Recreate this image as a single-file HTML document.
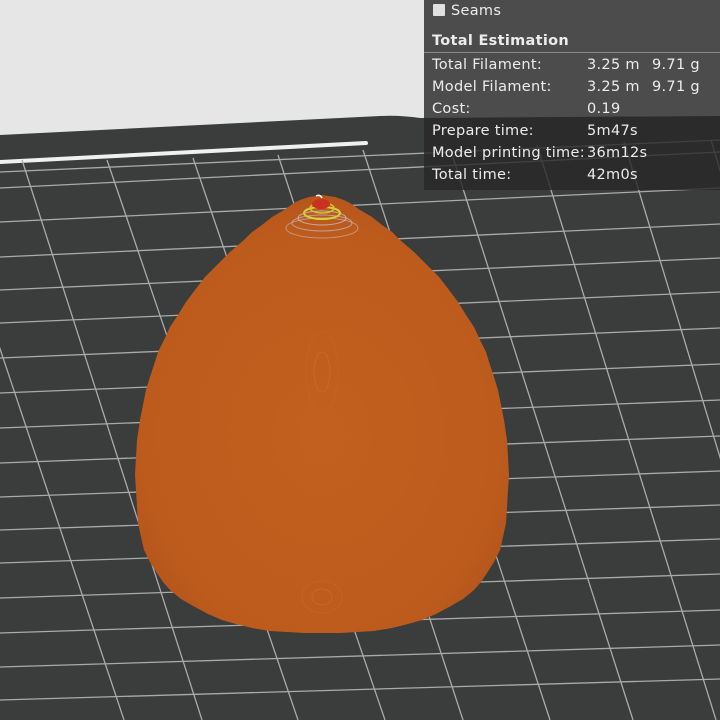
<!DOCTYPE html>
<html><head><meta charset="utf-8"><style>
html,body{margin:0;padding:0;width:720px;height:720px;overflow:hidden;background:#e6e6e6;font-family:"DejaVu Sans","Liberation Sans",sans-serif}
svg{position:absolute;left:0;top:0}
.panel{position:absolute;left:424px;top:0;width:296px;height:190px;background:rgba(39,39,39,0.81);color:#ececec;font-size:14.5px;letter-spacing:0.3px}
.row{position:absolute;left:8px;white-space:nowrap;line-height:20px}
.c2{position:absolute;left:155px;top:0}
.c3{position:absolute;left:220px;top:0}
.sep{position:absolute;left:0;top:52px;width:296px;height:1px;background:#8a8a8a}
.cb{position:absolute;left:9px;top:4px;width:12px;height:12px;background:#e0e0e0;border-radius:1px}
</style></head><body>
<svg width="720" height="720" viewBox="0 0 720 720">
<defs>
<radialGradient id="eg" cx="0.5" cy="0.55" r="0.6">
<stop offset="0" stop-color="#c2601f"/>
<stop offset="0.8" stop-color="#bd5b1d"/>
<stop offset="1" stop-color="#b05219"/>
</radialGradient>
</defs>
<path d="M0,135 L380,116 Q400,115 420,118 L720,116 L720,720 L0,720 Z" fill="#3b3d3d"/>
<line x1="0" y1="162" x2="366" y2="143" stroke="#f0f0f0" stroke-width="4" stroke-linecap="round"/>
<g stroke="#a9abab" stroke-width="1.3" fill="none">
<line x1="0" y1="172" x2="720" y2="140"/>
<line x1="0" y1="188" x2="720" y2="152"/>
<line x1="0" y1="222" x2="720" y2="188"/>
<line x1="0" y1="257" x2="720" y2="224"/>
<line x1="0" y1="290" x2="720" y2="258"/>
<line x1="0" y1="323" x2="720" y2="292"/>
<line x1="0" y1="358" x2="720" y2="328"/>
<line x1="0" y1="393" x2="720" y2="364"/>
<line x1="0" y1="428" x2="720" y2="400"/>
<line x1="0" y1="463" x2="720" y2="436"/>
<line x1="0" y1="497" x2="720" y2="471"/>
<line x1="0" y1="530" x2="720" y2="505"/>
<line x1="0" y1="563" x2="720" y2="539"/>
<line x1="0" y1="598" x2="720" y2="574"/>
<line x1="0" y1="633" x2="720" y2="610"/>
<line x1="0" y1="667" x2="720" y2="645"/>
<line x1="0" y1="700" x2="720" y2="679"/>
<line x1="-63" y1="160" x2="124" y2="720"/>
<line x1="22" y1="160" x2="202" y2="720"/>
<line x1="107" y1="160" x2="298" y2="720"/>
<line x1="193" y1="158" x2="385" y2="720"/>
<line x1="278" y1="155" x2="463" y2="720"/>
<line x1="363" y1="150" x2="550" y2="720"/>
<line x1="450" y1="148" x2="633" y2="720"/>
<line x1="537" y1="145" x2="716" y2="720"/>
<line x1="624" y1="142" x2="800" y2="720"/>
<line x1="711" y1="140" x2="884" y2="720"/>
</g>
<g transform="translate(322,0)">
<polygon fill="url(#eg)" points="0,195 13,197 22,200 28,203 38,210 50,217 60,225 70,232 78,240 92,252 105,265 117,277 127,290 136,302 144,315 152,327 158,340 164,352 168,365 172,377 176,390 179,405 182,420 185,440 186,457 187,475 186,490 185,507 184,523 181,537 178,550 172,562 165,573 159,582 152,590 141,599 127,607 114,614 100,620 86,624 70,628 52,631 35,632 18,633 0,633 -18,633 -35,632 -52,631 -70,628 -86,624 -100,620 -114,614 -127,607 -141,599 -152,590 -159,582 -165,573 -172,562 -178,550 -181,537 -184,523 -185,507 -186,490 -187,475 -186,457 -185,440 -182,420 -179,405 -176,390 -172,377 -168,365 -164,352 -158,340 -152,327 -144,315 -136,302 -127,290 -117,277 -105,265 -92,252 -78,240 -70,232 -60,225 -50,217 -38,210 -28,203 -22,200 -13,197"/>
</g>
<g fill="none" stroke-width="1">
<ellipse cx="322" cy="372" rx="8" ry="20" stroke="#cc6a2a" opacity="0.8"/>
<ellipse cx="322" cy="372" rx="16" ry="40" stroke="#c66529" opacity="0.6"/>
<ellipse cx="322" cy="597" rx="10" ry="8" stroke="#cc6a2a" opacity="0.8"/>
<ellipse cx="322" cy="597" rx="20" ry="16" stroke="#c66529" opacity="0.6"/>
<ellipse cx="322" cy="228" rx="36" ry="10" stroke="#c8c8d0" opacity="0.55"/>
<ellipse cx="322" cy="223" rx="30" ry="8" stroke="#c0c4d8" opacity="0.65"/>
<ellipse cx="322" cy="218" rx="24" ry="7" stroke="#c8c8d0" opacity="0.75"/>
<ellipse cx="322" cy="213" rx="18" ry="6" stroke="#d0d040" stroke-width="2"/>
<ellipse cx="322" cy="208" rx="12" ry="5" stroke="#d8c030" stroke-width="1.5"/>
</g>
<ellipse cx="321" cy="204" rx="9" ry="5" fill="#c83020"/>
<path d="M316,196 q4,-2 6,2" stroke="#fff" stroke-width="1.5" fill="none"/>
</svg>
<div class="panel">
<div class="cb"></div>
<div class="row" style="top:1px;left:27px">Seams</div>
<div class="row" style="top:31px;font-weight:bold">Total Estimation</div>
<div class="sep"></div>
<div class="row" style="top:55px">Total Filament:<span class="c2">3.25 m</span><span class="c3">9.71 g</span></div>
<div class="row" style="top:77px">Model Filament:<span class="c2">3.25 m</span><span class="c3">9.71 g</span></div>
<div class="row" style="top:99px">Cost:<span class="c2">0.19</span></div>
<div class="row" style="top:121px">Prepare time:<span class="c2">5m47s</span></div>
<div class="row" style="top:143px">Model printing time:<span class="c2">36m12s</span></div>
<div class="row" style="top:165px">Total time:<span class="c2">42m0s</span></div>
</div>
</body></html>
